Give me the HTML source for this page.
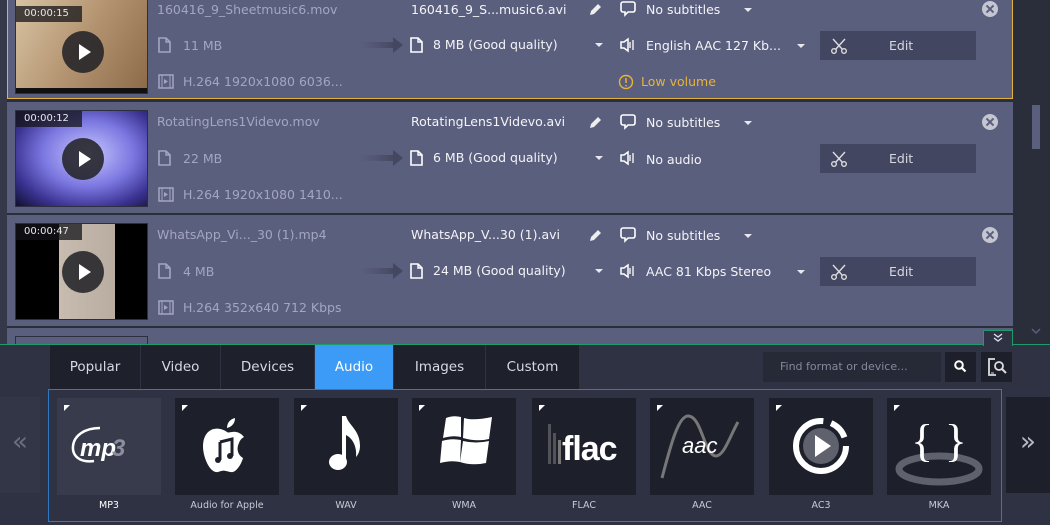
<!DOCTYPE html>
<html><head><meta charset="utf-8"><style>
*{margin:0;padding:0;box-sizing:border-box}
body{width:1050px;height:525px;overflow:hidden;background:#2a2d3a;font-family:"DejaVu Sans","Liberation Sans",sans-serif;position:relative}
.a{position:absolute}
.row{position:absolute;left:7px;width:1006px;height:111px;background:#5b5f7e}
.t{position:absolute;line-height:16px;height:16px;font-size:12.5px;white-space:nowrap}
.g{color:#a3a6c0}.w{color:#f4f4f8}
.thumb{position:absolute;left:8px;top:8px;width:133px;height:97px;overflow:hidden;border:1px solid #2d2f40}
.ts{position:absolute;left:0;top:0;width:66px;height:16px;background:rgba(20,20,25,.75);color:#e8e8e8;font-size:10px;line-height:16px;padding-left:8px}
.play{position:absolute;left:46px;top:27px;width:42px;height:42px;border-radius:50%;background:rgba(35,35,40,.88)}
.play:after{content:"";position:absolute;left:17px;top:13px;border-left:12px solid #fff;border-top:8px solid transparent;border-bottom:8px solid transparent}
.tri{position:absolute;width:0;height:0;border-left:4px solid transparent;border-right:4px solid transparent;border-top:4px solid #e8e8ee}
.close{position:absolute;left:975px;top:13px;width:16px;height:16px;border-radius:50%;background:#c5c6d1}
.close:before,.close:after{content:"";position:absolute;left:7px;top:3px;width:2px;height:10px;background:#5b5f7e;transform:rotate(45deg)}
.close:after{transform:rotate(-45deg)}
.tab{position:absolute;top:345px;height:44px;background:#1e212c;color:#d7d9e2;font-size:13.5px;line-height:44px;text-align:center}
.tile{position:absolute;top:398px;width:104px;height:97px;background:#1d202b}
.tile:before{content:"";position:absolute;left:7px;top:7px;border-top:6px solid #fff;border-right:6px solid transparent}
.lab{position:absolute;top:500px;width:104px;text-align:center;font-size:9.5px;color:#c9cbd6}
</style></head><body>
<div class="a" style="left:0;top:0;width:7px;height:345px;background:#353849"></div>

<div class="row" style="top:-11px;border:1px solid #e3b23c;height:110px">
 <div class="thumb" style="background:linear-gradient(120deg,#d8c3a3,#b49470 50%,#8c6a48);top:7px;left:7px">
  <div class="ts" style="top:8px">00:00:15</div><div class="play" style="top:33px"></div>
  <div class="a" style="left:0;bottom:0;width:133px;height:5px;background:#111"></div></div>
</div>
<div class="row" style="top:102px">
 <div class="thumb" style="background:radial-gradient(ellipse at 55% 45%,#c8c8ff,#7a76e0 45%,#3a3290 75%,#101030)"><div class="ts">00:00:12</div><div class="play"></div></div>
</div>
<div class="row" style="top:215px">
 <div class="thumb" style="background:linear-gradient(90deg,#000 43px,#c8bcb0 43px,#b9aca0 99px,#000 99px)"><div class="ts">00:00:47</div><div class="play"></div></div>
</div>
<div class="row" style="top:328px"><div class="thumb" style="height:20px"></div></div>

<svg class="a" style="left:0;top:0" width="1050" height="345">
 <defs>
  <linearGradient id="ar" x1="0" x2="1"><stop offset="0" stop-color="#4a4e6a" stop-opacity="0"/><stop offset="1" stop-color="#43475f"/></linearGradient>
  <g id="file"><path d="M1 1h7l4 4v10H1z" fill="none" stroke="#fff" stroke-width="1.6"/><path d="M8 1v4h4" fill="none" stroke="#fff" stroke-width="1.4"/></g>
  <g id="filed"><path d="M1 1h7l4 4v10H1z" fill="none" stroke="#a3a6c0" stroke-width="1.6"/><path d="M8 1v4h4" fill="none" stroke="#a3a6c0" stroke-width="1.4"/></g>
  <g id="film"><rect x="1" y="1" width="14" height="13" fill="none" stroke="#a3a6c0" stroke-width="1.5"/><path d="M4 1v13M12 1v13" stroke="#a3a6c0"/><path d="M6 5l4 2.5-4 2.5z" fill="#a3a6c0"/></g>
  <g id="arrow"><rect x="0" y="-3" width="35" height="6" fill="url(#ar)"/><path d="M33 -8l10 8-10 8z" fill="#43475f"/></g>
  <g id="pen"><path d="M2 12l1-4 7-7 3 3-7 7z" fill="#eee"/></g>
  <g id="sub"><path d="M3 1h10a2 2 0 0 1 2 2v6a2 2 0 0 1-2 2H8l-3 3v-3H3a2 2 0 0 1-2-2V3a2 2 0 0 1 2-2z" fill="none" stroke="#fff" stroke-width="1.6"/></g>
  <g id="spk"><path d="M1 4h3l4-3v12L4 10H1z" fill="none" stroke="#fff" stroke-width="1.5"/><path d="M10 4v6M13 2v10" stroke="#fff" stroke-width="1.3"/></g>
  <g id="sc"><circle cx="3" cy="13" r="2.3" fill="none" stroke="#ddd" stroke-width="1.4"/><circle cx="13" cy="13" r="2.3" fill="none" stroke="#ddd" stroke-width="1.4"/><path d="M4.5 11.5L14 1M11.5 11.5L2 1" stroke="#ddd" stroke-width="1.4"/></g>
 </defs>
 <use href="#filed" x="158" y="37"/><use href="#film" x="158" y="74"/><use href="#arrow" x="360" y="45"/>
 <use href="#file" x="410" y="37"/><use href="#pen" x="588" y="3"/><use href="#sub" x="620" y="1"/><use href="#spk" x="620" y="38"/>
 <circle cx="626" cy="82" r="6.5" fill="none" stroke="#e9b33a" stroke-width="1.4"/><path d="M626 78v5M626 85v1.2" stroke="#e9b33a" stroke-width="1.5"/>
 <use href="#filed" x="158" y="150"/><use href="#film" x="158" y="187"/><use href="#arrow" x="360" y="158"/>
 <use href="#file" x="410" y="150"/><use href="#pen" x="588" y="116"/><use href="#sub" x="620" y="114"/><use href="#spk" x="620" y="151"/>
 <use href="#filed" x="158" y="263"/><use href="#film" x="158" y="300"/><use href="#arrow" x="360" y="271"/>
 <use href="#file" x="410" y="263"/><use href="#pen" x="588" y="229"/><use href="#sub" x="620" y="227"/><use href="#spk" x="620" y="264"/>
</svg>

<div class="t g" style="left:157px;top:2px">160416_9_Sheetmusic6.mov</div>
<div class="t g" style="left:183px;top:38px">11 MB</div>
<div class="t g" style="left:183px;top:74px">H.264 1920x1080 6036...</div>
<div class="t w" style="left:411px;top:2px">160416_9_S...music6.avi</div>
<div class="t w" style="left:433px;top:37px">8 MB (Good quality)</div>
<div class="tri" style="left:595px;top:43px"></div>
<div class="t w" style="left:646px;top:2px">No subtitles</div>
<div class="tri" style="left:744px;top:8px"></div>
<div class="t w" style="left:646px;top:38px">English AAC 127 Kb...</div>
<div class="tri" style="left:797px;top:44px"></div>
<div class="t" style="left:641px;top:74px;color:#e9b33a">Low volume</div>
<div class="a" style="left:820px;top:31px;width:156px;height:29px;background:#434661"></div>
<div class="t" style="left:889px;top:38px;color:#d8d9e2">Edit</div>
<div class="close" style="left:982px;top:1px"></div>

<div class="t g" style="left:157px;top:114px">RotatingLens1Videvo.mov</div>
<div class="t g" style="left:183px;top:151px">22 MB</div>
<div class="t g" style="left:183px;top:187px">H.264 1920x1080 1410...</div>
<div class="t w" style="left:411px;top:114px">RotatingLens1Videvo.avi</div>
<div class="t w" style="left:433px;top:150px">6 MB (Good quality)</div>
<div class="tri" style="left:595px;top:156px"></div>
<div class="t w" style="left:646px;top:115px">No subtitles</div>
<div class="tri" style="left:744px;top:121px"></div>
<div class="t w" style="left:646px;top:152px">No audio</div>
<div class="a" style="left:820px;top:144px;width:156px;height:29px;background:#434661"></div>
<div class="t" style="left:889px;top:151px;color:#d8d9e2">Edit</div>
<div class="close" style="left:982px;top:114px"></div>

<div class="t g" style="left:157px;top:227px">WhatsApp_Vi..._30 (1).mp4</div>
<div class="t g" style="left:183px;top:264px">4 MB</div>
<div class="t g" style="left:183px;top:300px">H.264 352x640 712 Kbps</div>
<div class="t w" style="left:411px;top:227px">WhatsApp_V...30 (1).avi</div>
<div class="t w" style="left:433px;top:263px">24 MB (Good quality)</div>
<div class="tri" style="left:595px;top:269px"></div>
<div class="t w" style="left:646px;top:228px">No subtitles</div>
<div class="tri" style="left:744px;top:234px"></div>
<div class="t w" style="left:646px;top:264px">AAC 81 Kbps Stereo</div>
<div class="tri" style="left:797px;top:270px"></div>
<div class="a" style="left:820px;top:257px;width:156px;height:29px;background:#434661"></div>
<div class="t" style="left:889px;top:264px;color:#d8d9e2">Edit</div>
<div class="close" style="left:982px;top:227px"></div>

<svg class="a" style="left:0;top:0;pointer-events:none" width="1050" height="345">
 <use href="#sc" x="831" y="38"/><use href="#sc" x="831" y="151"/><use href="#sc" x="831" y="264"/>
</svg>

<div class="a" style="left:1032px;top:105px;width:8px;height:44px;background:#5b5f7e"></div>
<svg class="a" style="left:1030px;top:327px" width="12" height="8"><path d="M2 2l4 4 4-4" fill="none" stroke="#5b5f7e" stroke-width="1.5"/></svg>

<div class="a" style="left:0;top:345px;width:1050px;height:180px;background:#2e3242"></div>
<div class="a" style="left:0;top:344px;width:983px;height:1px;background:#1f9a6a"></div>
<div class="a" style="left:983px;top:330px;width:30px;height:16px;background:#2e3242;border:1px solid #1f9a6a;border-bottom:none"></div>
<div class="a" style="left:1012px;top:344px;width:38px;height:1px;background:#1f9a6a"></div>
<svg class="a" style="left:991px;top:333px" width="14" height="11"><path d="M3 1l4 3 4-3M3 5l4 3 4-3" fill="none" stroke="#dde" stroke-width="1.4"/></svg>

<div class="tab" style="left:50px;width:90px">Popular</div>
<div class="tab" style="left:141px;width:79px">Video</div>
<div class="tab" style="left:221px;width:93px">Devices</div>
<div class="tab" style="left:315px;width:78px;background:#3c9bf6;color:#fff">Audio</div>
<div class="tab" style="left:394px;width:91px">Images</div>
<div class="tab" style="left:486px;width:93px">Custom</div>

<div class="a" style="left:763px;top:352px;width:178px;height:30px;background:#262a37;color:#858899;font-size:11px;line-height:30px;padding-left:17px">Find format or device...</div>
<div class="a" style="left:945px;top:352px;width:31px;height:30px;background:#1d202b"></div>
<svg class="a" style="left:953px;top:359px" width="14" height="14"><circle cx="6" cy="6" r="3.8" fill="none" stroke="#fff" stroke-width="2"/><path d="M9 9l3.5 3.5" stroke="#fff" stroke-width="2.2"/></svg>
<div class="a" style="left:981px;top:352px;width:31px;height:30px;background:#1d202b"></div>
<svg class="a" style="left:986px;top:356px" width="22" height="22"><path d="M9 3H3v16h7" fill="none" stroke="#ddd" stroke-width="1.8"/><path d="M5 17h3" stroke="#ddd"/><circle cx="13" cy="10" r="4" fill="none" stroke="#ddd" stroke-width="1.8"/><path d="M16 13l4 4" stroke="#ddd" stroke-width="2"/></svg>

<div class="a" style="left:0;top:397px;width:40px;height:96px;background:#323647;color:#6b6f83;font-size:26px;line-height:90px;text-align:center">«</div>
<div class="a" style="left:1006px;top:397px;width:44px;height:96px;background:#1d202b;color:#b8bac6;font-size:26px;line-height:90px;text-align:center">»</div>
<div class="a" style="left:48px;top:389px;width:954px;height:133px;border:1px solid #2f78c4"></div>

<div class="tile" style="left:57px;background:#373b4c"></div>
<div class="tile" style="left:175px"></div>
<div class="tile" style="left:294px"></div>
<div class="tile" style="left:412px"></div>
<div class="tile" style="left:532px"></div>
<div class="tile" style="left:650px"></div>
<div class="tile" style="left:769px"></div>
<div class="tile" style="left:887px"></div>

<svg class="a" style="left:0;top:398px" width="1050" height="97">
 <path d="M100 30 C84 30 74 38 73 48 C72 58 80 65 94 63" fill="none" stroke="#fff" stroke-width="2.5"/>
 <text x="80" y="58" font-family="Liberation Sans" font-style="italic" font-weight="bold" font-size="24" fill="#fff">mp</text>
 <text x="112" y="58" font-family="Liberation Sans" font-style="italic" font-weight="bold" font-size="24" fill="#8b8e9c">3</text>
 <path d="M227 34c-6-4-12-4-16-2-8 4-10 16-6 28 3 9 8 15 13 14 3-1 5-2 8-1 4 1 6 2 9 0 4-3 7-9 8-13-5-3-7-9-4-15 1-3 3-5 5-6-3-4-8-6-12-5-2 0-4 1-5 0z" fill="#fff"/>
 <path d="M227 30c0-6 4-9 8-10 0 6-4 9-8 10z" fill="#fff"/>
 <path d="M220 44l12-3v17M220 44v18" stroke="#1d202b" stroke-width="3" fill="none"/><circle cx="218" cy="62" r="3" fill="#1d202b"/><circle cx="230" cy="58" r="3" fill="#1d202b"/>
 <path d="M344 18v45" stroke="#fff" stroke-width="4"/><ellipse cx="338" cy="64" rx="9" ry="8" fill="#fff"/><path d="M346 18c3 10 14 14 14 30 0 5-2 9-4 11 1-8-2-18-10-22z" fill="#fff"/>
 <g fill="#fff"><path d="M446 20q7-3 15-1v20q-8-2-18 1z"/><path d="M464 20q9 3 28-1l-3 22q-12 3-26-1z"/><path d="M442 43q9-3 19-1l-1 22q-9-2-20 1z"/><path d="M463 43q13 3 26 0l-3 22q-14 3-26-1z"/></g>
 <g fill="#777"><rect x="548" y="26" width="3" height="40" opacity=".6"/><rect x="553" y="35" width="3" height="31" opacity=".6"/><rect x="558" y="42" width="3" height="24"/></g>
 <text x="562" y="62" font-family="Liberation Sans" font-weight="bold" font-size="34" fill="#fff" letter-spacing="-1">flac</text>
 <path d="M662 80c8-30 16-62 26-62 14 0 16 40 28 40 8 0 14-20 22-34" fill="none" stroke="#777" stroke-width="3"/>
 <text x="682" y="55" font-family="Liberation Sans" font-style="italic" font-size="22" fill="#fff">aac</text>
 <circle cx="821" cy="48" r="25" fill="none" stroke="#fff" stroke-width="6" stroke-dasharray="120 8 20 10"/>
 <circle cx="821" cy="48" r="18" fill="#5f616c"/><path d="M815 37l16 11-16 11z" fill="#fff"/>
 <ellipse cx="939" cy="71" rx="40" ry="13" fill="none" stroke="#5f616c" stroke-width="7"/>
 <text x="939" y="58" text-anchor="middle" font-family="Liberation Serif" font-size="46" fill="#fff">{ }</text>
</svg>

<div class="lab" style="left:57px;color:#fff">MP3</div>
<div class="lab" style="left:175px">Audio for Apple</div>
<div class="lab" style="left:294px">WAV</div>
<div class="lab" style="left:412px">WMA</div>
<div class="lab" style="left:532px">FLAC</div>
<div class="lab" style="left:650px">AAC</div>
<div class="lab" style="left:769px">AC3</div>
<div class="lab" style="left:887px">MKA</div>
</body></html>
